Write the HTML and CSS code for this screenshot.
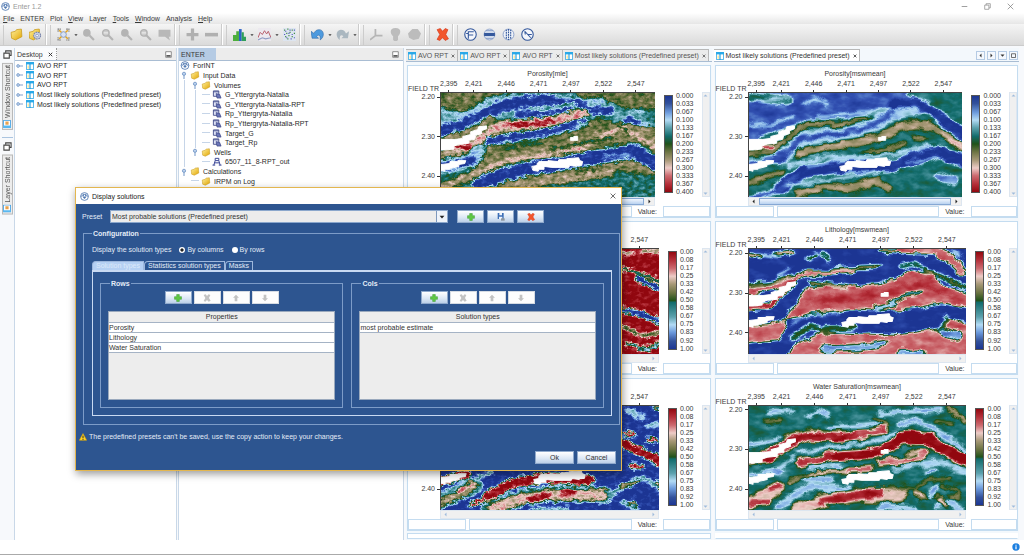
FILE: index.html
```html
<!DOCTYPE html>
<html lang="en">

<head>
    <meta charset="UTF-8">
    <meta name="viewport" content="width=device-width, initial-scale=1.0">
    <title>Enter 1.2</title>
    <link rel="stylesheet" href="styles.css">
</head>

<body>
    <svg class="defs" width="0" height="0" aria-hidden="true">
        <defs>
            <linearGradient id="gold" x1="0" y1="0" x2="1" y2="1">
                <stop offset="0" stop-color="#fff2a0" />
                <stop offset="1" stop-color="#e2a400" />
            </linearGradient>
            <!-- grey value -> colour scale, blue (0) to red (1) -->
            <filter id="smooth" filterUnits="userSpaceOnUse" x="-8" y="-8" width="236" height="124" color-interpolation-filters="sRGB">
                <feGaussianBlur in="SourceGraphic" stdDeviation="1.1" result="soft" />
                <feTurbulence type="fractalNoise" baseFrequency="0.07 0.12" numOctaves="3" seed="7" result="noise" />
                <feDisplacementMap in="soft" in2="noise" scale="8" xChannelSelector="R" yChannelSelector="G" result="moved" />
                <feColorMatrix in="noise" values="0 0 1 0 0  0 0 1 0 0  0 0 1 0 0  0 0 0 0 1" result="grey" />
                <feComposite in="moved" in2="grey" operator="arithmetic" k2="1" k3="0.16" k4="-0.08" result="field" />
                <feComponentTransfer in="field">
                    <feFuncR type="table" tableValues="0.11 0.2 0.42 0.7 0.36 0.07 0.13 0.42 0.66 0.93 0.8 0.7 0.57" />
                    <feFuncG type="table" tableValues="0.21 0.32 0.6 0.86 0.63 0.42 0.32 0.45 0.6 0.8 0.42 0.18 0.03" />
                    <feFuncB type="table" tableValues="0.58 0.7 0.86 0.96 0.68 0.42 0.1 0.26 0.47 0.78 0.44 0.22 0.06" />
                </feComponentTransfer>
            </filter>
            <filter id="rough" filterUnits="userSpaceOnUse" x="-8" y="-8" width="236" height="124" color-interpolation-filters="sRGB">
                <feGaussianBlur in="SourceGraphic" stdDeviation="1.1" result="soft" />
                <feTurbulence type="fractalNoise" baseFrequency="0.17 0.25" numOctaves="3" seed="3" result="noise" />
                <feDisplacementMap in="soft" in2="noise" scale="7" xChannelSelector="R" yChannelSelector="G" result="moved" />
                <feColorMatrix in="noise" values="0 0 1 0 0  0 0 1 0 0  0 0 1 0 0  0 0 0 0 1" result="grey" />
                <feComposite in="moved" in2="grey" operator="arithmetic" k2="1" k3="0.3" k4="-0.15" result="field" />
                <feComponentTransfer in="field">
                    <feFuncR type="table" tableValues="0.11 0.2 0.42 0.7 0.36 0.07 0.13 0.42 0.66 0.93 0.8 0.7 0.57" />
                    <feFuncG type="table" tableValues="0.21 0.32 0.6 0.86 0.63 0.42 0.32 0.45 0.6 0.8 0.42 0.18 0.03" />
                    <feFuncB type="table" tableValues="0.58 0.7 0.86 0.96 0.68 0.42 0.1 0.26 0.47 0.78 0.44 0.22 0.06" />
                </feComponentTransfer>
            </filter>
        </defs>
        <symbol id="i-logo" viewBox="0 0 12 12">
            <circle cx="6" cy="6" r="5.2" fill="#fff" stroke="#3c69a8" />
            <path d="M1 5.5h2.3l1-1.8 1.7 5 1.7-5 1 1.8H11M4 7.5h4M3.5 3.2h5" fill="none" stroke="#3c69a8" />
        </symbol>
        <symbol id="i-folder" viewBox="0 0 12 12">
            <path d="M1 4l4-1 1-1.5 4.5-.5.5 7-6 3L1.500 9.500z" fill="url(#gold)" stroke="#c99a1c" stroke-width=".7" />
        </symbol>
        <symbol id="i-folder-gear" viewBox="0 0 12 12">
            <path d="M0 4l4-1 1-1.500 4.500-.5.500 7-6 3L.5 9.500z" fill="url(#gold)" stroke="#c99a1c" stroke-width=".7" />
            <circle cx="7.500" cy="7" r="3.200" fill="#ccd3e6" stroke="#7784ac" stroke-dasharray="1.500 .7" />
            <circle cx="7.500" cy="7" r="1.200" fill="#fff" stroke="#7784ac" stroke-width=".6" />
        </symbol>
        <symbol id="i-fit" viewBox="0 0 12 12">
            <path d="M1 3.500V1h2.500M8.500 1H11v2.500M11 8.500V11H8.500M3.500 11H1V8.500" fill="none" stroke="#777" stroke-dasharray="1.500 .5" />
            <circle cx="6" cy="6" r="2.600" fill="#d7e3f5" stroke="#7d93bd" stroke-width=".8" />
            <path d="M2 2l2 2M10 2L8 4M2 10l2-2M10 10L8 8" stroke="#e0a320" stroke-width="1.400" />
        </symbol>
        <symbol id="i-zoom" viewBox="0 0 12 12">
            <circle cx="4.500" cy="4.500" r="3.500" fill="#b4b4b4" />
            <path d="M7 7l4 4" stroke="#b4b4b4" stroke-width="2" />
        </symbol>
        <symbol id="i-zoom-minus" viewBox="0 0 12 12">
            <circle cx="4.500" cy="4.500" r="3" fill="#ccc" stroke="#b4b4b4" stroke-width="1.300" />
            <path d="M2.500 4.500h4" stroke="#eee" />
            <path d="M7 7l4 4" stroke="#b4b4b4" stroke-width="2" />
        </symbol>
        <symbol id="i-note" viewBox="0 0 12 12">
            <path d="M.5 1.500h11v6.500H10l1 3.500L6.500 8H.5z" fill="#b8b8b8" />
        </symbol>
        <symbol id="i-plus-grey" viewBox="0 0 12 12">
            <path d="M4.500.5h3v4h4v3h-4v4h-3v-4h-4v-3h4z" fill="#b0b0b0" />
        </symbol>
        <symbol id="i-minus-grey" viewBox="0 0 12 12">
            <path d="M0 4.500h12v3.300H0z" fill="#b0b0b0" />
        </symbol>
        <symbol id="i-hist" viewBox="0 0 12 12">
            <path d="M0 6.500h3V12H0zM3 3h2.500v9H3z" fill="#4cae3c" />
            <path d="M5.500 1H8v11H5.500z" fill="#2a62c8" />
            <path d="M8 4h2v8H8zM10 8h2v4h-2z" fill="#2f9f5a" />
        </symbol>
        <symbol id="i-line" viewBox="0 0 12 12">
            <path d="M0 0h12v12H0z" fill="#ece9ef" />
            <path d="M0 9l2-5 2 2 2-3.500 2 3L9.500 3l2.500 6" fill="none" stroke="#b8606c" stroke-width=".9" />
            <path d="M0 11l4-2 3 1 5-1" fill="none" stroke="#8f9cc4" />
        </symbol>
        <symbol id="i-scatter" viewBox="0 0 12 12">
            <path d="M0 0h12v12H0z" fill="#dde5f0" />
            <path d="M1 2h1M4 1h1M8 2h1M3 5h1M6 4h1M10 5h1M2 8h1M5 7h1M8 8h1M4 10h1" stroke="#37853a" stroke-width="1.100" />
            <path d="M2 3h1M6 2h1M10 2h1M1 6h1M5 5h1M8 6h1M3 9h1M7 10h1M10 9h1" stroke="#4b55b8" stroke-width="1.100" />
        </symbol>
        <symbol id="i-undo" viewBox="0 0 12 12">
            <path d="M0 3l1 6.500h6L5.200 7.700C7 5.500 9 6.500 8.500 11 13 8 12 1.500 7.500 1.500 5 1.500 3.500 3 2.800 5z" fill="#4d9ade" stroke="#2a64a5" stroke-width=".5" />
        </symbol>
        <symbol id="i-redo" viewBox="0 0 12 12">
            <path d="M12 3l-1 6.500H5l1.800-1.800C5 5.500 3 6.500 3.500 11-1 8 0 1.500 4.500 1.500 7 1.500 8.500 3 9.200 5z" fill="#aab7c0" />
        </symbol>
        <symbol id="i-axes" viewBox="0 0 12 12">
            <path d="M5 1v6L0 11M5 7h6.500" fill="none" stroke="#b5b5b5" stroke-width="1.600" />
        </symbol>
        <symbol id="i-bulb" viewBox="0 0 12 12">
            <path d="M6 0c6 0 5 5.500 2.300 7.500V11l-1 1H4.800l-1-1V7.500C1 5.500 0 0 6 0z" fill="#bcbcbc" />
        </symbol>
        <symbol id="i-globe" viewBox="0 0 12 12">
            <path d="M4 1h5l3 4-2 5-5 1-4-2-1-4z" fill="#bcbcbc" />
        </symbol>
        <symbol id="i-cross-red" viewBox="0 0 12 12">
            <path d="M1 1.500l3-1L6 3l2.500-2.500 2.500 1L9 6l2.500 4-3 1.500L6 9l-2.500 2.500-2.500-1L3.500 6z" fill="#f2552c" stroke="#d63416" stroke-width=".6" />
        </symbol>
        <symbol id="i-cross-grey" viewBox="0 0 12 12">
            <path d="M1 1.500l3-1L6 3l2.500-2.500 2.500 1L9 6l2.500 4-3 1.500L6 9l-2.500 2.500-2.500-1L3.500 6z" fill="#c2c2c2" />
        </symbol>
        <symbol id="i-facies" viewBox="0 0 12 12">
            <circle cx="6" cy="6" r="5.300" fill="#f4f6fb" stroke="#34589c" />
            <path d="M4 10V3.500h5M4 6.500h4.500M2 5h2" fill="none" stroke="#34589c" />
        </symbol>
        <symbol id="i-lines" viewBox="0 0 12 12">
            <circle cx="6" cy="6" r="5" fill="#e9eef7" stroke="#7f97c4" stroke-width=".7" />
            <path d="M1 4.500h10v3H1z" fill="#34589c" />
            <path d="M2.500 2.500h7M2.500 9.500h7" stroke="#7f97c4" />
        </symbol>
        <symbol id="i-grid" viewBox="0 0 12 12">
            <circle cx="6" cy="6" r="5" fill="#eef2f9" stroke="#7f97c4" stroke-width=".8" />
            <path d="M4 1.500v9M6 1v10M8 1.500v9" stroke="#34589c" stroke-dasharray="1.500 .8" />
        </symbol>
        <symbol id="i-clock" viewBox="0 0 12 12">
            <circle cx="6" cy="6" r="5.300" fill="#f4f6fb" stroke="#34589c" />
            <path d="M3.500 3l5.500 6M3.500 3l.5 3M6 6h4" fill="none" stroke="#34589c" />
        </symbol>
        <symbol id="i-view" viewBox="0 0 10 10">
            <path d="M.5.5h9v9h-9z" fill="#fff" stroke="#1f9ede" />
            <path d="M0 0h10v3H0z" fill="#2aa9e8" />
            <path d="M5 2v8" stroke="#1f9ede" stroke-width="1.400" />
            <path d="M2 4.500h1.500v4H2z" fill="#fbe28c" />
        </symbol>
        <symbol id="i-shortcut" viewBox="0 0 10 10">
            <path d="M.5.5h9v9h-9z" fill="#fff" stroke="#1f8ede" />
            <path d="M0 0h10v3H0z" fill="#5ab8f0" />
            <path d="M3 4h4v4H3z" fill="#e9a24e" />
        </symbol>
        <symbol id="i-cube" viewBox="0 0 10 10">
            <path d="M1 1h6v6H1z" fill="#dfe3f6" stroke="#454f8c" />
            <path d="M4 4l4 1 1.500 4H5z" fill="#6b76b8" stroke="#333d80" stroke-width=".7" />
            <path d="M1 2h6" stroke="#454f8c" />
        </symbol>
        <symbol id="i-well" viewBox="0 0 10 10">
            <path d="M3 4V1.500h4V4M1.500 9l1.500-5h4l1.500 5M2 6.500h6M0 9h3M7 9h3" fill="none" stroke="#3c4796" stroke-width="1.100" />
        </symbol>
        <symbol id="i-key" viewBox="0 0 10 10">
            <circle cx="3" cy="5" r="2" fill="#bcd2ee" stroke="#6a8fc2" />
            <path d="M5 5h5" stroke="#6a8fc2" stroke-width="1.200" />
        </symbol>
        <symbol id="i-key-open" viewBox="0 0 10 10">
            <circle cx="5" cy="3.500" r="2" fill="#bcd2ee" stroke="#6a8fc2" />
            <path d="M5 5.500V10" stroke="#6a8fc2" stroke-width="1.200" />
        </symbol>
        <symbol id="i-restore" viewBox="0 0 10 10">
            <path d="M3 3V1h6v5H7" fill="none" stroke="#444" stroke-width="1.200" />
            <path d="M1 3.500h6V9H1z" fill="#fff" stroke="#444" stroke-width="1.200" />
        </symbol>
        <symbol id="i-min" viewBox="0 0 10 10">
            <path d="M1 1h8v8H1z" fill="#fff" stroke="#666" />
            <path d="M2 7h6" stroke="#333" stroke-width="2" />
        </symbol>
        <symbol id="i-x" viewBox="0 0 10 10">
            <path d="M1.500 1.500l7 7M8.500 1.500l-7 7" stroke="currentColor" stroke-width="2" />
        </symbol>
        <symbol id="i-down" viewBox="0 0 10 10">
            <path d="M1 3h8L5 7.500z" fill="currentColor" />
        </symbol>
        <symbol id="i-left" viewBox="0 0 10 10">
            <path d="M7 1v8L3 5z" fill="currentColor" />
        </symbol>
        <symbol id="i-right" viewBox="0 0 10 10">
            <path d="M3 1v8l4-4z" fill="currentColor" />
        </symbol>
        <symbol id="i-up" viewBox="0 0 10 10">
            <path d="M1 7h8L5 3z" fill="currentColor" />
        </symbol>
        <symbol id="i-add" viewBox="0 0 12 12">
            <path d="M4 .8h4V4h3.200v4H8v3.200H4V8H.8V4H4z" fill="#5fc844" stroke="#37962a" stroke-width=".7" />
        </symbol>
        <symbol id="i-save" viewBox="0 0 12 12">
            <path d="M1 0h9v9H1z" fill="#3d6fb6" />
            <path d="M3.500 0h4v3.500h-4zM3 5.500h5V9H3z" fill="#eef4fc" />
            <path d="M6 8h5.500v3.500H6z" fill="#8e979f" />
        </symbol>
        <symbol id="i-arrow-up" viewBox="0 0 12 12">
            <path d="M6 1l4.500 4.500H8V11H4V5.500H1.500z" fill="#c2c2c2" />
        </symbol>
        <symbol id="i-arrow-down" viewBox="0 0 12 12">
            <path d="M6 11L1.500 6.500H4V1h4v5.500h2.500z" fill="#c2c2c2" />
        </symbol>
        <symbol id="i-warn" viewBox="0 0 12 12">
            <path d="M6 .8L11.500 11H.5z" fill="#ffd428" stroke="#d9a300" stroke-width=".8" />
            <path d="M6 4v4M6 9v1.300" stroke="#222" stroke-width="1.400" />
        </symbol>
        <symbol id="i-info" viewBox="0 0 12 12">
            <circle cx="6" cy="6" r="5.500" fill="#1c7fe0" />
            <path d="M6 5v4.500M6 2.500v1.500" stroke="#fff" stroke-width="1.800" />
        </symbol>
    </svg>

    <header class="titlebar">
        <svg class="icon"><use href="#i-logo" /></svg>
        <span>Enter 1.2</span>
        <div class="window-controls">
            <button aria-label="Minimize"><svg viewBox="0 0 10 10"><path d="M1 5h8" stroke="#777" /></svg></button>
            <button aria-label="Restore"><svg viewBox="0 0 10 10"><path d="M3 3V1h6v6H7M1 3h6v6H1z" fill="none" stroke="#888" /></svg></button>
            <button aria-label="Close"><svg viewBox="0 0 10 10"><path d="M1 1l8 8M9 1L1 9" stroke="#777" /></svg></button>
        </div>
    </header>

    <nav class="menubar">
        <button><u>F</u>ile</button>
        <button>ENTER</button>
        <button>Plot</button>
        <button><u>V</u>iew</button>
        <button>Layer</button>
        <button><u>T</u>ools</button>
        <button><u>W</u>indow</button>
        <button>Analysis</button>
        <button><u>H</u>elp</button>
    </nav>

    <div class="toolbar">
        <div class="tool-group">
            <button aria-label="Open"><svg><use href="#i-folder" /></svg></button>
            <button aria-label="Project settings"><svg><use href="#i-folder-gear" /></svg></button>
        </div>
        <div class="tool-group">
            <button aria-label="Fit"><svg><use href="#i-fit" /></svg></button>
            <button class="drop" aria-label="Fit options"><svg><use href="#i-down" /></svg></button>
            <button aria-label="Zoom"><svg><use href="#i-zoom" /></svg></button>
            <button aria-label="Zoom out"><svg><use href="#i-zoom-minus" /></svg></button>
            <button aria-label="Zoom in"><svg><use href="#i-zoom" /></svg></button>
            <button aria-label="Zoom reset"><svg><use href="#i-zoom-minus" /></svg></button>
            <button aria-label="Note"><svg><use href="#i-note" /></svg></button>
        </div>
        <div class="tool-group">
            <button aria-label="Add"><svg><use href="#i-plus-grey" /></svg></button>
            <button aria-label="Remove"><svg><use href="#i-minus-grey" /></svg></button>
        </div>
        <div class="tool-group">
            <button aria-label="Histogram"><svg><use href="#i-hist" /></svg></button>
            <button class="drop" aria-label="Histogram options"><svg><use href="#i-down" /></svg></button>
            <button aria-label="Curves"><svg><use href="#i-line" /></svg></button>
            <button class="drop" aria-label="Curve options"><svg><use href="#i-down" /></svg></button>
            <button aria-label="Cross plot"><svg><use href="#i-scatter" /></svg></button>
        </div>
        <div class="tool-group">
            <button aria-label="Undo"><svg><use href="#i-undo" /></svg></button>
            <button class="drop" aria-label="Undo list"><svg><use href="#i-down" /></svg></button>
            <button aria-label="Redo"><svg><use href="#i-redo" /></svg></button>
            <button class="drop" aria-label="Redo list"><svg><use href="#i-down" /></svg></button>
        </div>
        <div class="tool-group">
            <button aria-label="Axes"><svg><use href="#i-axes" /></svg></button>
            <button aria-label="Light"><svg><use href="#i-bulb" /></svg></button>
            <button aria-label="Surface"><svg><use href="#i-globe" /></svg></button>
        </div>
        <div class="tool-group">
            <button aria-label="Delete"><svg><use href="#i-cross-red" /></svg></button>
        </div>
        <div class="tool-group">
            <button aria-label="Facies"><svg><use href="#i-facies" /></svg></button>
            <button aria-label="Horizons"><svg><use href="#i-lines" /></svg></button>
            <button aria-label="Grid"><svg><use href="#i-grid" /></svg></button>
            <button aria-label="History"><svg><use href="#i-clock" /></svg></button>
        </div>
    </div>

    <main class="workspace">
        <aside class="shortcuts">
            <svg class="icon"><use href="#i-restore" /></svg>
            <button class="shortcut"><svg><use href="#i-shortcut" /></svg>Window Shortcut</button>
            <hr>
            <svg class="icon"><use href="#i-restore" /></svg>
            <button class="shortcut"><svg><use href="#i-shortcut" /></svg>Layer Shortcut</button>
        </aside>

        <section class="panel desktop">
            <div class="panel-head">
                <span class="panel-tab">Desktop <svg class="close"><use href="#i-x" /></svg></span>
                <svg class="min"><use href="#i-min" /></svg>
            </div>
            <ul class="tree desktop-tree">
                <li><svg><use href="#i-key" /></svg><svg><use href="#i-view" /></svg>AVO RPT</li>
                <li><svg><use href="#i-key" /></svg><svg><use href="#i-view" /></svg>AVO RPT</li>
                <li><svg><use href="#i-key" /></svg><svg><use href="#i-view" /></svg>AVO RPT</li>
                <li><svg><use href="#i-key" /></svg><svg><use href="#i-view" /></svg>Most likely solutions (Predefined preset)</li>
                <li><svg><use href="#i-key" /></svg><svg><use href="#i-view" /></svg>Most likely solutions (Predefined preset)</li>
            </ul>
        </section>

        <section class="panel project">
            <div class="panel-head">
                <span class="panel-tab active">ENTER</span>
                <svg class="min"><use href="#i-min" /></svg>
            </div>
            <ul class="tree project-tree">
                <li class="root"><svg><use href="#i-logo" /></svg>ForINT</li>
                <li><svg class="key"><use href="#i-key-open" /></svg><svg><use href="#i-folder" /></svg>Input Data</li>
                <li><i></i><svg class="key"><use href="#i-key-open" /></svg><svg><use href="#i-folder" /></svg>Volumes</li>
                <li><i></i><i></i><i class="elbow"></i><svg><use href="#i-cube" /></svg>G_Yttergryta-Natalia</li>
                <li><i></i><i></i><i class="elbow"></i><svg><use href="#i-cube" /></svg>G_Yttergryta-Natalia-RPT</li>
                <li><i></i><i></i><i class="elbow"></i><svg><use href="#i-cube" /></svg>Rp_Yttergryta-Natalia</li>
                <li><i></i><i></i><i class="elbow"></i><svg><use href="#i-cube" /></svg>Rp_Yttergryta-Natalia-RPT</li>
                <li><i></i><i></i><i class="elbow"></i><svg><use href="#i-cube" /></svg>Target_G</li>
                <li><i></i><i></i><i class="elbow"></i><svg><use href="#i-cube" /></svg>Target_Rp</li>
                <li><i></i><svg class="key"><use href="#i-key-open" /></svg><svg><use href="#i-folder" /></svg>Wells</li>
                <li><i></i><i class="blank"></i><i class="elbow"></i><svg><use href="#i-well" /></svg>6507_11_8-RPT_out</li>
                <li><svg class="key"><use href="#i-key-open" /></svg><svg><use href="#i-folder" /></svg>Calculations</li>
                <li><i class="blank"></i><i class="elbow"></i><svg><use href="#i-folder" /></svg>IRPM on Log</li>
            </ul>
        </section>

        <section class="viewer">
            <div class="viewer-tabs">
                <button><svg><use href="#i-view" /></svg>AVO RPT<svg class="close"><use href="#i-x" /></svg></button>
                <button><svg><use href="#i-view" /></svg>AVO RPT<svg class="close"><use href="#i-x" /></svg></button>
                <button><svg><use href="#i-view" /></svg>AVO RPT<svg class="close"><use href="#i-x" /></svg></button>
                <button><svg><use href="#i-view" /></svg>Most likely solutions (Predefined preset)<svg class="close"><use href="#i-x" /></svg></button>
            </div>
            <div class="plots" id="plotsLeft"></div>
            <div class="strip"></div>
        </section>

        <section class="viewer">
            <div class="viewer-tabs">
                <button class="active"><svg><use href="#i-view" /></svg>Most likely solutions (Predefined preset)<svg class="close"><use href="#i-x" /></svg></button>
                <div class="tab-nav">
                    <button aria-label="Previous tab"><svg><use href="#i-left" /></svg></button>
                    <button aria-label="Next tab"><svg><use href="#i-right" /></svg></button>
                    <button aria-label="Tab list"><svg><use href="#i-down" /></svg></button>
                    <button aria-label="Maximize"><svg viewBox="0 0 10 10"><path d="M1 1.500h8V9H1z" fill="none" stroke="#444" stroke-width="1.500" /></svg></button>
                </div>
            </div>
            <div class="plots" id="plotsRight"></div>
            <div class="strip plain"></div>
        </section>
    </main>

    <footer class="statusbar"><svg><use href="#i-info" /></svg></footer>

    <div class="dialog" role="dialog" aria-labelledby="dialogTitle">
        <div class="dialog-title">
            <svg class="icon"><use href="#i-logo" /></svg>
            <span id="dialogTitle">Display solutions</span>
            <button aria-label="Close dialog"><svg viewBox="0 0 10 10"><path d="M1 1l8 8M9 1L1 9" stroke="#333" stroke-width="1.200" /></svg></button>
        </div>
        <form class="dialog-body" onsubmit="return false">
            <div class="preset">
                <label for="preset">Preset</label>
                <div class="select">
                    <select id="preset">
                        <option>Most probable solutions (Predefined preset)</option>
                    </select>
                    <span class="select-arrow"><svg><use href="#i-down" /></svg></span>
                </div>
                <div class="preset-buttons">
                    <button class="btn" aria-label="New preset"><svg><use href="#i-add" /></svg></button>
                    <button class="btn" aria-label="Save preset"><svg><use href="#i-save" /></svg></button>
                    <button class="btn" aria-label="Delete preset"><svg><use href="#i-cross-red" /></svg></button>
                </div>
            </div>

            <fieldset class="config">
                <legend>Configuration</legend>
                <div class="orientation">
                    <span>Display the solution types</span>
                    <label><input type="radio" name="by" checked>By columns</label>
                    <label><input type="radio" name="by">By rows</label>
                </div>
                <div class="tabs">
                    <button class="active">Solution types</button>
                    <button>Statistics solution types</button>
                    <button>Masks</button>
                </div>
                <div class="tab-content">
                    <fieldset class="box">
                        <legend>Rows</legend>
                        <div class="box-buttons">
                            <button class="btn" aria-label="Add row"><svg><use href="#i-add" /></svg></button>
                            <button class="btn" disabled aria-label="Remove row"><svg><use href="#i-cross-grey" /></svg></button>
                            <button class="btn" disabled aria-label="Move row up"><svg><use href="#i-arrow-up" /></svg></button>
                            <button class="btn" disabled aria-label="Move row down"><svg><use href="#i-arrow-down" /></svg></button>
                        </div>
                        <div class="table-wrap">
                            <table>
                                <tr><th>Properties</th></tr>
                                <tr><td>Porosity</td></tr>
                                <tr><td>Lithology</td></tr>
                                <tr><td>Water Saturation</td></tr>
                            </table>
                        </div>
                    </fieldset>
                    <fieldset class="box">
                        <legend>Cols</legend>
                        <div class="box-buttons">
                            <button class="btn" aria-label="Add column"><svg><use href="#i-add" /></svg></button>
                            <button class="btn" disabled aria-label="Remove column"><svg><use href="#i-cross-grey" /></svg></button>
                            <button class="btn" disabled aria-label="Move column up"><svg><use href="#i-arrow-up" /></svg></button>
                            <button class="btn" disabled aria-label="Move column down"><svg><use href="#i-arrow-down" /></svg></button>
                        </div>
                        <div class="table-wrap">
                            <table>
                                <tr><th>Solution types</th></tr>
                                <tr><td>most probable estimate</td></tr>
                            </table>
                        </div>
                    </fieldset>
                </div>
            </fieldset>

            <p class="warning"><svg><use href="#i-warn" /></svg>The predefined presets can't be saved, use the copy action to keep your changes.</p>
            <div class="actions">
                <button class="btn">Ok</button>
                <button class="btn">Cancel</button>
            </div>
        </form>
    </div>

    <script src="script.js"></script>
</body>

</html>
```

FILE: styles.css
```css
* {
    margin: 0;
    padding: 0;
    box-sizing: border-box;
}

body {
    display: flex;
    flex-direction: column;
    height: 100vh;
    overflow: hidden;
    position: relative;
    font-family: "Liberation Sans", Arial, sans-serif;
    font-size: 7px;
    line-height: 9px;
    color: #3a3a3a;
    background: #fff;
}

button,
input,
select {
    font: inherit;
    color: inherit;
    border: none;
    background: none;
}

svg {
    display: block;
    flex: none;
}

ul {
    list-style: none;
}

.defs {
    position: absolute;
}

.icon {
    width: 9px;
    height: 9px;
}

.titlebar {
    display: flex;
    align-items: center;
    height: 13px;
    padding: 0 10px 0 1px;
    gap: 3px;
    color: #999;
}

.window-controls {
    display: flex;
    gap: 16px;
    margin-left: auto;
}

.window-controls svg {
    width: 7px;
    height: 7px;
}

.menubar {
    display: flex;
    gap: 6px;
    height: 11px;
    padding-left: 3px;
    background: linear-gradient(#fff, #e6e6e6);
}

/* toolbar */
.toolbar {
    display: flex;
    height: 22px;
    background: linear-gradient(#f5f5f5, #dadada);
    border-bottom: 1px solid #ccc;
}

.tool-group {
    display: flex;
    align-items: center;
    padding: 0 1px 0 3px;
    border-right: 1px solid #fff;
    box-shadow: inset -1px 0 #ccc;
}

.tool-group::before {
    content: "";
    width: 3px;
    height: 20px;
    border-left: 1px solid #ccc;
}

.tool-group:last-child {
    border: none;
    box-shadow: none;
}

.tool-group button {
    display: flex;
    justify-content: center;
    width: 19px;
}

.tool-group svg {
    width: 13px;
    height: 13px;
}

.tool-group .drop {
    width: 6px;
}

.tool-group .drop svg {
    width: 4px;
    height: 4px;
}

/* panels */
.workspace {
    display: flex;
    flex: 1;
    min-height: 0;
    padding: 2px 5px 0 0;
    background: #f7f9fc;
}

.shortcuts {
    display: flex;
    flex-direction: column;
    align-items: center;
    width: 14px;
    padding-top: 2px;
}

.shortcut {
    display: flex;
    align-items: center;
    gap: 2px;
    width: 11px;
    padding: 1px 0;
    margin-top: 4px;
    writing-mode: vertical-rl;
    transform: rotate(180deg);
    background: #ececec;
    border: 1px solid #b9b9b9;
    color: #555;
}

.shortcut svg {
    width: 8px;
    height: 8px;
}

.shortcuts hr {
    width: 11px;
    margin: 7px 0 4px;
    border: none;
    border-top: 1px solid #aac4e0;
}

.panel {
    background: #fff;
    border: 1px solid #c9d8e8;
    border-width: 0 1px;
}

.desktop {
    flex: 0 0 163px;
}

.project {
    flex: 0 0 226px;
    margin-left: 1px;
}

.panel-head {
    display: flex;
    align-items: center;
    height: 13px;
    padding-right: 4px;
    background: #ececec;
    border-bottom: 1px solid #a9bdd3;
}

.panel-tab {
    display: flex;
    align-items: center;
    gap: 5px;
    height: 12px;
    padding: 0 3px 0 2px;
    background: #fafbfc;
    border-right: 1px dotted #999;
}

.panel-tab.active {
    width: 37px;
    background: #b5cbe4;
    border: none;
}

.close {
    width: 5px;
    height: 5px;
}

.min {
    width: 7px;
    height: 7px;
    margin-left: auto;
}

.tree {
    display: grid;
    grid-auto-rows: 1fr;
    color: #2a2a2a;
}

.tree li {
    display: flex;
    align-items: center;
    white-space: nowrap;
}

.tree svg {
    width: 8px;
    height: 8px;
}

.desktop-tree {
    height: 48px;
}

.desktop-tree li {
    gap: 3px;
    padding-left: 1px;
}

.desktop-tree svg:first-child {
    width: 7px;
}

.project-tree {
    height: 125px;
}

.project-tree svg {
    width: 10px;
    height: 9px;
    margin-right: 3px;
}

.project-tree .root {
    padding-left: 1px;
}

.project-tree .key {
    width: 8px;
    height: 8px;
    margin: 0 2px 0 1px;
}

.project-tree i {
    position: relative;
    align-self: stretch;
    width: 6px;
    margin-left: 5px;
    border-left: 1px solid #c6d5e8;
}

.project-tree .elbow {
    border: none;
}

.project-tree .elbow::before {
    content: "";
    position: absolute;
    left: -4px;
    top: 4px;
    width: 8px;
    border-top: 1px solid #c6d5e8;
}

.project-tree .blank {
    border-color: transparent;
}

/* viewers */
.viewer {
    display: flex;
    flex-direction: column;
    flex: 1;
    min-width: 0;
    margin-left: 2px;
    padding: 1px 0 0;
    background: #f3f8fc;
}

.viewer-tabs {
    display: flex;
    height: 13px;
    border-bottom: 1px solid #a9bdd3;
    white-space: nowrap;
}

.viewer-tabs > button {
    display: flex;
    align-items: center;
    gap: 2px;
    padding: 0 2px;
    background: #ebebeb;
    border: 1px solid #b8b8b8;
    border-width: 1px 1px 0 0;
    color: #555;
}

.viewer-tabs > .active {
    background: #fff;
    color: #333;
}

.viewer-tabs svg {
    width: 8px;
    height: 8px;
}

.viewer-tabs .close {
    width: 4px;
    height: 4px;
    margin-left: 1px;
}

.tab-nav {
    display: flex;
    align-items: center;
    gap: 2px;
    margin-left: auto;
    padding-right: 1px;
}

.tab-nav button {
    padding: 1px;
    background: #f4f8fd;
    border: 1px solid #b5cbe4;
    color: #333;
}

.viewer-tabs .tab-nav svg {
    width: 5px;
    height: 5px;
}

.plots {
    display: flex;
    flex-direction: column;
    flex: 1;
    gap: 3px;
    min-height: 0;
    padding: 3px 1px 0;
}

.plot {
    display: flex;
    flex-direction: column;
    flex: 1;
    min-height: 0;
    background: #fff;
    border: 1px solid #c4dcf0;
}

.plot-area {
    display: grid;
    grid-template-columns: 32px 1fr auto 8px;
    grid-template-rows: 11px 15px 1fr 9px;
    flex: 1;
    min-height: 0;
}

.plot-title {
    grid-column: 2;
    padding-top: 3px;
    font-size: 7px;
    font-weight: normal;
    text-align: center;
    white-space: nowrap;
}

.field {
    grid-row: 2;
    grid-column: 1;
    padding-top: 7px;
    white-space: nowrap;
}

.x-axis {
    grid-row: 2;
    grid-column: 2;
    display: grid;
    grid-template-columns: 16fr repeat(6, 33fr) 3fr;
    padding-top: 2px;
    text-align: center;
}

.x-axis span::after {
    content: "";
    display: block;
    width: 1px;
    height: 2px;
    margin: 2px auto 0;
    background: #333;
}

.x-axis span:first-child {
    justify-self: center;
}

.y-axis {
    grid-row: 3;
    grid-column: 1;
    display: flex;
    flex-direction: column;
    justify-content: space-between;
    padding-bottom: 17px;
    text-align: right;
}

.y-axis span::after {
    content: "";
    display: inline-block;
    width: 3px;
    height: 1px;
    margin-left: 2px;
    vertical-align: middle;
    background: #333;
}

.section {
    grid-row: 3;
    grid-column: 2;
    width: 100%;
    height: 100%;
    min-height: 0;
    overflow: hidden;
    border: 1px solid #444;
    border-width: 1px 0 0 1px;
}

.section path {
    fill: none;
    stroke-linecap: round;
    stroke-linejoin: round;
}

.section .gaps path {
    fill: #fff;
    stroke: #fff;
    stroke-width: 1px;
}

.scale {
    grid-row: 3;
    grid-column: 3;
    display: flex;
    gap: 3px;
    padding: 3px 8px 4px 9px;
}

.scale-bar {
    width: 9px;
    border: 1px solid #555;
}

.blue-first {
    background: linear-gradient(#1c3694, #33529b 8%, #6b99db 17%, #b3dbf5 25%, #5ca1ad 33%, #126b6b 42%, #21521a 50%, #6b7342 58%, #a89978 67%, #edccc7 75%, #cc6b70 83%, #b32e38 92%, #91080f);
}

.red-first {
    background: linear-gradient(#91080f, #b32e38 8%, #cc6b70 17%, #edccc7 25%, #a89978 33%, #6b7342 42%, #21521a 50%, #126b6b 52%, #5ca1ad 67%, #b3dbf5 75%, #6b99db 83%, #33529b 92%, #1c3694);
}

.scale-labels {
    display: flex;
    flex-direction: column;
    justify-content: space-between;
    margin: -3px 0;
    line-height: 8px;
}

.scroll {
    display: flex;
    justify-content: space-between;
    align-items: center;
    background: #f0f0f0;
    border: 1px solid #dde6f0;
    color: #9fbbdc;
}

.scroll svg {
    width: 5px;
    height: 5px;
}

.scroll-v {
    grid-row: 3;
    grid-column: 4;
    flex-direction: column;
}

.scroll-h {
    grid-row: 4;
    grid-column: 2;
    padding: 0 2px;
}

.scroll-h.live {
    color: #222;
}

.scroll .thumb {
    flex: 1;
    height: 7px;
    margin: 0 3px;
    background: linear-gradient(#f2f7fe, #b9d2f0);
    border: 1px solid #86a8d4;
}

.readout {
    display: flex;
    gap: 3px;
    height: 11px;
}

.readout input {
    min-width: 0;
    flex: 58;
    background: #fff;
    border: 1px solid #c4dcf0;
}

.readout .wide {
    flex: 166;
}

.readout .value {
    flex: 46;
}

.readout label {
    padding: 1px 3px;
}

.strip {
    height: 6px;
    margin: 2px 1px 1px;
    background: #fff;
    border: 1px solid #c4dcf0;
}

.strip.plain {
    border-color: transparent transparent #c4dcf0;
}

.statusbar {
    display: flex;
    align-items: center;
    justify-content: flex-end;
    height: 15px;
    padding-right: 4px;
    border-bottom: 1px solid #aaa;
}

.statusbar svg {
    width: 8px;
    height: 8px;
}

/* dialog */
.dialog {
    position: absolute;
    left: 75px;
    top: 187px;
    width: 547px;
    background: #2d5590;
    border: 1px solid #e3b64f;
    box-shadow: 1px 3px 8px rgba(0, 0, 0, 0.4);
    color: #e4ecf7;
}

.dialog-title {
    display: flex;
    align-items: center;
    gap: 3px;
    height: 16px;
    padding: 0 5px 0 4px;
    background: #fff;
    color: #222;
}

.dialog-title button {
    margin-left: auto;
}

.dialog-title button svg {
    width: 6px;
    height: 6px;
}

.dialog-body {
    padding: 6px 1px 6px 3px;
}

.preset {
    display: flex;
    align-items: center;
    height: 13px;
    padding-left: 3px;
}

.preset label {
    width: 28px;
}

.select {
    position: relative;
    flex: 0 1 338px;
}

.select select {
    appearance: none;
    display: block;
    width: 100%;
    height: 13px;
    padding-left: 1px;
    background: #ececec;
    border: 1px solid #8ba7cc;
    color: #333;
}

.select-arrow {
    position: absolute;
    top: 1px;
    right: 1px;
    padding: 3px 2px 2px;
    background: #eef3fa;
    border-left: 1px solid #7d98bd;
    color: #222;
    pointer-events: none;
}

.select-arrow svg {
    width: 6px;
    height: 6px;
}

.preset-buttons {
    display: flex;
    gap: 3px;
    margin-left: 9px;
}

.btn {
    display: flex;
    align-items: center;
    justify-content: center;
    width: 27px;
    height: 13px;
    background: linear-gradient(#fff, #dbe7f5 60%, #bcd0e8);
    border: 1px solid #8fa9cc;
    color: #333;
}

.btn:disabled {
    background: #fdfdfd;
    border-color: #d5dbe3;
}

.btn svg {
    width: 8px;
    height: 8px;
}

fieldset {
    border: 1px solid #7d9cc8;
}

legend {
    margin-left: 2px;
    padding: 0 1px;
    font-weight: bold;
}

.config {
    margin: 6px 0 0 4px;
    padding: 0 7px 8px 8px;
}

.config > legend {
    margin-left: 0;
}

.orientation {
    display: flex;
    align-items: center;
    gap: 8px;
    height: 23px;
}

.orientation label {
    display: flex;
    align-items: center;
    gap: 2px;
}

.orientation input {
    appearance: none;
    width: 6px;
    height: 6px;
    border-radius: 50%;
    background: #fff;
}

.orientation input:checked {
    background: radial-gradient(#222 30%, #fff 45%);
}

.tabs {
    display: flex;
}

.tabs button {
    height: 9px;
    padding: 0 3px;
    line-height: 8px;
    border: 1px solid #9db7dc;
    border-bottom: none;
    border-top-left-radius: 4px;
}

.tabs .active {
    background: #b5d0f3;
    color: #dce9fa;
}

.tab-content {
    display: grid;
    grid-template-columns: 243fr 252fr;
    gap: 8px;
    padding: 7px;
    border: 1px solid #c9daf2;
    border-top-width: 2px;
}

.box {
    min-width: 0;
    padding: 3px 7px 7px;
}

.box-buttons {
    display: flex;
    justify-content: center;
    gap: 2px;
    margin-bottom: 7px;
}

.table-wrap {
    min-height: 89px;
    background: #ededed;
    border: 1px solid #9aa9bd;
    color: #333;
}

table {
    width: 100%;
    border-collapse: collapse;
}

th {
    height: 10px;
    font-weight: normal;
    background: #ededed;
    border-bottom: 1px solid #a5b3c5;
}

td {
    height: 10px;
    background: #fff;
    border-bottom: 1px solid #a5b3c5;
}

.warning {
    display: flex;
    align-items: center;
    gap: 2px;
    margin-top: 7px;
}

.warning svg {
    width: 8px;
    height: 8px;
}

.actions {
    display: flex;
    justify-content: flex-end;
    gap: 3px;
    margin-top: 10px;
    padding-right: 4px;
}

.actions .btn {
    width: 39px;
}
```

FILE: script.js
```js
const porosityScale = ["0.000", "0.033", "0.067", "0.100", "0.133", "0.167", "0.200", "0.233", "0.267", "0.300", "0.333", "0.367", "0.400"];
const unitScale = ["0.00", "0.08", "0.17", "0.25", "0.33", "0.42", "0.50", "0.58", "0.67", "0.75", "0.83", "0.92", "1.00"];

// layers: [level 0-12, stroke width (0 = filled), path]
const porosityMle = [
    [7, 26, "M0 5H60M150 3H216"],
    [4, 22, "M0 36L30 28 60 14 100 14 140 16 170 20 200 36 216 42"],
    [3, 5, "M0 18L25 24 50 6 80 4M120 6L165 8M195 20H205"],
    [0, 12, "M0 40L30 30 60 14 85 9 110 7"],
    [0, 8, "M78 22L110 23 130 17M110 8L140 11 150 18 170 18M190 28L204 36 216 38"],
    [5, 5, "M120 14L130 11 136 15"],
    [7.500, 9, "M0 50L30 40 50 28"],
    [8, 13, "M0 70L15 58 36 52 60 35 90 33 120 28 143 22"],
    [9.500, 7, "M15 56L36 52 60 34 90 32 120 28 143 21"],
    [12, 4, "M14 56H30M68 32L90 33 112 29"],
    [3, 10, "M48 50L70 47 110 41 145 30"],
    [0, 6, "M48 50L70 46 110 40 145 29"],
    [7.500, 50, "M60 76L150 52 216 60"],
    [3, 10, "M48 50L70 47 110 41 145 30"],
    [0, 6, "M48 50L70 46 110 40 145 29"],
    [7, 9, "M50 62L90 54 130 44 165 34"],
    [9, 4, "M40 82L65 70 100 65 145 56M160 44L185 36 200 46 216 56M0 69L30 62"],
    [5.500, 3, "M60 58L100 50M110 58L175 46M140 32L165 24 190 42"],
    [6, 4, "M160 54L200 52 216 62"],
    [3, 15, "M0 76L30 70 38 60M38 95L62 84 90 78 125 72 160 66 195 60 216 72"],
    [0, 8, "M0 76L18 74 32 69"],
    [0, 13, "M38 95L62 85 90 78 125 73 155 67 195 60 216 73"],
    [2, 5, "M165 66L190 64"],
    [8, 9, "M0 98L25 88 40 80M75 98L130 88 170 82"],
    [5, 5, "M60 104L120 96 190 100 216 90"]
];

const porosityRight = [
    [1, 0, "M-8-8H150L185 14 224 40V60L180 20 140 30 60 28 0 50H-8z"],
    [5, 9, "M165 0L190 5 219 14M0 4L40 8"],
    [3, 3, "M5 8L40 6M55 12L65 5 78 12M70 24L120 19 140 16M0 34L25 32 45 24M160 10L180 14 200 28"],
    [4, 13, "M0 64L30 52 60 34 100 32 140 24"],
    [7.500, 6, "M0 63L24 60 40 46 60 31 90 33 125 27"],
    [11, 4, "M12 55H24"],
    [3, 14, "M34 66L60 45 90 44 120 36 146 20 165 18"],
    [1, 6, "M30 70L55 46 90 43 120 36 145 20"],
    [0, 8, "M145 12L170 10 190 22 216 42"],
    [8, 8, "M50 62L90 54 130 47 150 36 170 32 190 37 216 57"],
    [9, 3, "M196 44L216 57"],
    [7.500, 5, "M105 66L140 59 156 52M168 46L185 52M166 58L178 56"],
    [5, 6, "M160 60L190 48 216 66"],
    [3, 5, "M40 75L80 66 120 66 150 62 180 56"],
    [1, 8, "M0 75L25 69 38 62"],
    [0, 13, "M32 98L55 82 90 76 140 76 170 68 192 61 216 70"],
    [2, 4, "M60 78L90 70M160 72L190 66"],
    [7.500, 6, "M0 93L20 86 34 82"],
    [1, 5, "M0 108L28 102 48 86"],
    [3, 3, "M40 95L60 92 130 82"],
    [8, 8, "M50 105L75 97 100 99 130 90 140 100"],
    [5, 7, "M150 96L180 84 216 90M160 105H216"],
    [2, 9, "M192 86L206 92"]
];

const lithologyMle = [
    [12, 0, "M-8-8H230V120H-8z"],
    [8, 5, "M170 4H190M200 3H216"],
    [3, 3, "M180 20L200 26 219 34"],
    [0, 6, "M170 62L195 66 219 76M195 30L219 42"],
    [6, 4, "M180 80L200 90 219 86"],
    [3, 4, "M184 98L205 104 219 96"]
];

const lithologyRight = [
    [-1, 0, "M-8-8H230V120H-8z"],
    [9, 4, "M0 5L12 8M25 7L44 3M132 2L150 3"],
    [3, 3, "M10 5L28 8M28 28L40 20"],
    [10, 9, "M150 0L185 2 200 10 211 22"],
    [3, 4, "M202 2L210 8"],
    [6, 4, "M58 10L66 6M72 6L78 11M152 18L163 15 174 20"],
    [7, 4, "M0 37L25 34 42 28M175 22L195 30 214 40"],
    [10, 7, "M0 43L24 40 40 34"],
    [10, 5, "M44 32L56 25 80 25 105 22"],
    [8, 4, "M82 21L128 18"],
    [11, 7, "M0 60L20 58 44 34"],
    [8, 4, "M60 34L100 40 130 37 140 32"],
    [10.200, 0, "M32 74L48 56 58 38 90 40 125 38 145 31 158 22 180 26 196 38 224 48V62L190 56 165 62 132 64 100 62 60 68z"],
    [10.800, 8, "M60 54L110 50 150 42 175 34 198 46"],
    [2, 4, "M124 62L144 57"],
    [3, 3, "M144 54L156 47 172 45"],
    [2, 3, "M42 77L60 68 90 66"],
    [10, 0, "M-8 80L20 78 34 72 38 82 30 94-8 98z"],
    [10, 0, "M32 114L52 94 75 86 120 88 150 88 190 82 198 70 228 82V114z"],
    [6, 6, "M44 92L62 80 76 86M76 82L104 81M196 72L190 84"],
    [2, 9, "M194 86L206 91"],
    [2, 7, "M74 104L110 102 134 97M150 107H170"]
];

const waterMle = [
    [-1, 0, "M-8-8H230V120H-8z"],
    [3, 7, "M185 4L200 12M205 20H214"],
    [9, 4, "M212 2H219"],
    [12, 5, "M182 28L190 30M206 35H214M188 62L200 63M215 80L219 90M30 102L40 98"],
    [13, 9, "M170 34L195 46 219 58"],
    [13, 9, "M0 78L25 71"],
    [13, 10, "M46 94L70 80 100 75 148 77"],
    [4, 17, "M0 98L34 82"],
    [8, 9, "M0 100L22 90 32 82"],
    [10, 4, "M18 88L30 82"],
    [5, 17, "M48 108L80 95 110 91 162 92"],
    [9, 10, "M52 106L80 96 110 92 160 92"],
    [12, 6, "M88 96L105 93M122 89H130"],
    [4, 5, "M38 72L50 70M168 94L180 82 200 74 216 84M180 100L195 106M90 107H125"],
    [8, 4, "M180 84L196 78M186 100L194 102"]
];

const waterRight = [
    [5, 0, "M-8-8H230V120H-8z"],
    [2.500, 4, "M20 7L44 5M58 11L68 5 78 11M130 8L190 4M0 40L28 34M80 22L130 18"],
    [7, 4, "M16 17L30 15M125 12L135 20M185 16L200 18M35 32L60 26 90 26"],
    [8, 5, "M198 3L208 10 214 16"],
    [2.500, 5, "M150 20L165 14 180 22 200 34 219 52"],
    [11.500, 11, "M0 55L20 52 46 34"],
    [11.500, 9, "M44 37L58 31 90 33 115 29"],
    [10.500, 7, "M112 29L134 25"],
    [3, 4, "M50 48L80 43 120 38 145 28M28 70L45 52"],
    [12, 9, "M78 53L125 49 145 38 156 30 180 34"],
    [11, 8, "M50 59L80 54"],
    [12, 12, "M150 33L178 34 192 44 219 58"],
    [10, 6, "M98 66L120 65M130 58L165 56 176 48"],
    [5, 4, "M146 48L158 42M168 42L176 42"],
    [9, 4, "M40 78L70 68 96 66M158 50L172 46"],
    [3, 6, "M145 64L190 58 219 70M60 64L88 62"],
    [2, 4, "M176 68L186 66M0 72L30 66"],
    [2.500, 7, "M30 104L46 92 60 84 100 86M55 76H80"],
    [9, 12, "M0 100L18 92 30 84"],
    [11, 6, "M20 86L30 82M4 99H18"],
    [9, 14, "M48 108L75 97 110 92 150 92"],
    [11.500, 8, "M74 98L100 94 130 89"],
    [7, 4, "M140 84L165 86 175 78 200 74M192 82L205 88 208 96 198 94M170 96L186 92M40 76L60 72"],
    [2.500, 6, "M185 104L200 100 210 106M186 84L180 92M130 105H165"],
    [9, 5, "M166 90L172 92M190 96L196 104"]
];

// zones without data
const gaps = [
    "M0 48H14L22 47V45L30 43V40L37 38 38 35 46 34V37L41 39V42L35 44 34 48 28 49V52L18 53 13 55V58L4 59H0z",
    "M0 74L9 73V71H17V70H25L24 73 18 74V76L10 78 9 79H4V81L0 80z",
    "M92 76L97 75V73L99 71H108V70L118 71 119 69H127V68L139 67 140 70 143 71 142 75H137V76L130 75 129 77H112L104 76V79H99L98 81 93 80z",
    "M131 46H134V45H138V49H131z"
];

function grey(level) {
    const v = Math.max(0, Math.min(255, Math.round(level / 12 * 255)));
    return `rgb(${v},${v},${v})`;
}

function drawSection(layers, filter) {
    const shapes = layers.map(([level, width, d]) => width
        ? `<path d="${d}" stroke="${grey(level)}" stroke-width="${width}"/>`
        : `<path d="${d}" style="fill:${grey(level)}"/>`).join("");
    return `
        <svg class="section" viewBox="0 0 216 108" preserveAspectRatio="none">
            <g filter="url(#${filter})">
                <rect x="-8" y="-8" width="236" height="124" fill="${grey(5)}"/>
                ${shapes}
            </g>
            <g class="gaps">${gaps.map(d => `<path d="${d}"/>`).join("")}</g>
        </svg>`;
}

function addPlot(parent, title, layers, filter, porosity) {
    const id = "value" + document.querySelectorAll(".plot").length;
    const labels = porosity ? porosityScale : unitScale;
    const thumb = porosity ? `<span class="thumb"></span>` : "";
    const ticks = ["2,395", "2,421", "2,446", "2,471", "2,497", "2,522", "2,547"];

    document.getElementById(parent).insertAdjacentHTML("beforeend", `
        <article class="plot">
            <div class="plot-area">
                <h2 class="plot-title">${title}</h2>
                <span class="field">FIELD TR</span>
                <div class="x-axis">${ticks.map(t => `<span>${t}</span>`).join("")}</div>
                <div class="y-axis"><span>2.20</span><span>2.30</span><span>2.40</span></div>
                ${drawSection(layers, filter)}
                <div class="scale">
                    <div class="scale-bar ${porosity ? "blue-first" : "red-first"}"></div>
                    <div class="scale-labels">${labels.map(l => `<span>${l}</span>`).join("")}</div>
                </div>
                <div class="scroll scroll-v"><svg><use href="#i-up"/></svg><svg><use href="#i-down"/></svg></div>
                <div class="scroll scroll-h ${porosity ? "live" : ""}"><svg><use href="#i-left"/></svg>${thumb}<svg><use href="#i-right"/></svg></div>
            </div>
            <div class="readout">
                <input aria-label="Position">
                <input class="wide" aria-label="Details">
                <label for="${id}">Value:</label>
                <input class="value" id="${id}">
            </div>
        </article>`);
}

addPlot("plotsLeft", "Porosity[mle]", porosityMle, "rough", true);
addPlot("plotsLeft", "Lithology[mle]", lithologyMle, "rough", false);
addPlot("plotsLeft", "Water Saturation[mle]", waterMle, "rough", false);
addPlot("plotsRight", "Porosity[mswmean]", porosityRight, "smooth", true);
addPlot("plotsRight", "Lithology[mswmean]", lithologyRight, "smooth", false);
addPlot("plotsRight", "Water Saturation[mswmean]", waterRight, "smooth", false);
```
